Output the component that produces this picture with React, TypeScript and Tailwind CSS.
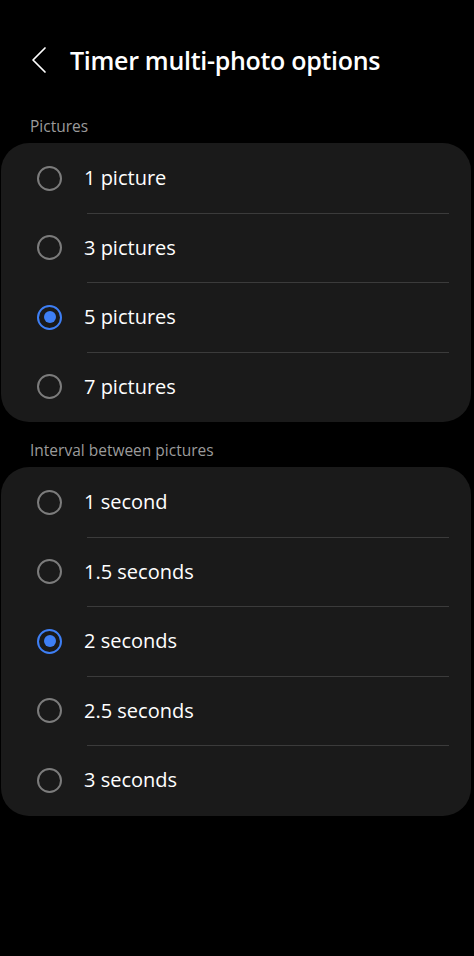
type Section = {
  title: string;
  options: string[];
  selected: number;
};

const sections: Section[] = [
  { title: 'Pictures', options: ['1 picture', '3 pictures', '5 pictures', '7 pictures'], selected: 2 },
  {
    title: 'Interval between pictures',
    options: ['1 second', '1.5 seconds', '2 seconds', '2.5 seconds', '3 seconds'],
    selected: 2,
  },
];

function Radio({ checked }: { checked: boolean }) {
  if (checked) {
    return (
      <span className="size-[25px] rounded-full border-[2.5px] border-[#3e7ff5] flex items-center justify-center">
        <span className="size-[12px] rounded-full bg-[#3e7ff5]" />
      </span>
    );
  }
  return <span className="size-[25px] rounded-full border-2 border-[#7c7c7c]" />;
}

export default function App() {
  return (
    <div className="w-[474px] h-[956px] bg-black text-white font-['Open_Sans','Noto_Sans',sans-serif]">
      <header className="flex items-center h-[60px] pt-[30px] box-content">
        <button className="w-[70px] flex items-center pl-[31px] text-white">
          <svg width="16" height="28" viewBox="0 0 16 28" fill="none" stroke="currentColor" strokeWidth="1.7" strokeLinecap="round" strokeLinejoin="round">
            <path d="M14 2 L2 14 L14 26" />
          </svg>
        </button>
        <h1 className="text-[25px] font-semibold tracking-[-0.3px] leading-none">Timer multi-photo options</h1>
      </header>

      {sections.map((section, s) => (
        <section key={section.title} className="flex flex-col">
          <span
            className={`pl-[30px] pb-[7px] text-[15.5px] leading-[20px] text-[#9b9b9b] ${s === 0 ? 'pt-[26px]' : 'pt-[18px]'}`}
          >
            {section.title}
          </span>
          <div className="ml-[1px] mr-[3px] bg-[#1a1a1a] rounded-[28px] py-[1px]">
            {section.options.map((option, i) => (
              <div key={option} className="flex flex-col">
                {i > 0 && <div className="ml-[86px] mr-[22px] h-px bg-[#3b3b3b]" />}
                <div className="flex items-center h-[68.5px] pl-[36px] gap-[22px]">
                  <Radio checked={i === section.selected} />
                  <span className="text-[20px] leading-none">{option}</span>
                </div>
              </div>
            ))}
          </div>
        </section>
      ))}
    </div>
  );
}
